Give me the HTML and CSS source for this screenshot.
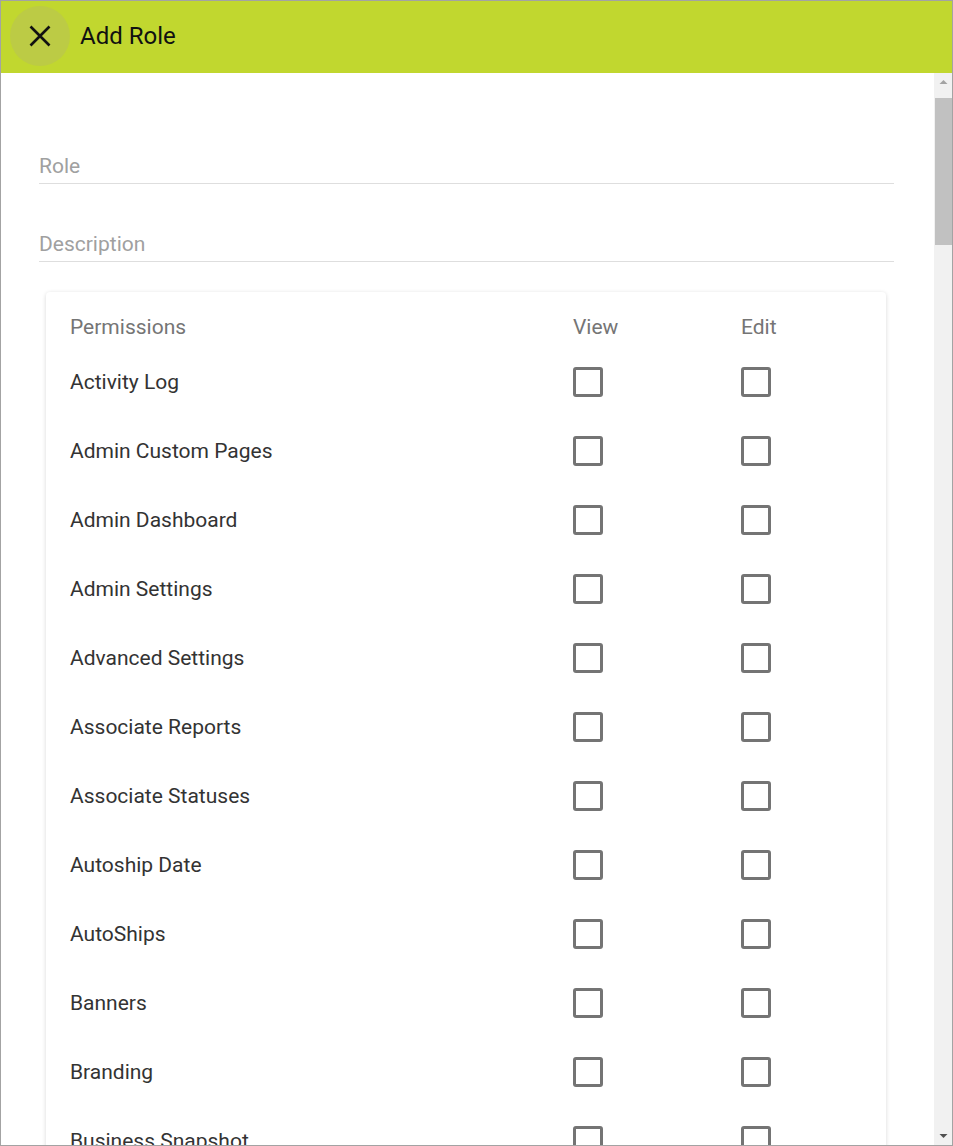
FILE: index.html
```html
<!DOCTYPE html>
<html lang="en">
<head>
<meta charset="utf-8">
<title>Add Role</title>
<link rel="stylesheet" href="styles.css">
</head>
<body>
<div class="dialog">
  <header class="topbar">
    <button class="close" aria-label="Close">
      <svg width="22" height="22" viewBox="0 0 22 22"><path d="M1.5 1.5 L20.5 20.5 M20.5 1.5 L1.5 20.5" stroke="#111" stroke-width="2.6" fill="none"/></svg>
    </button>
    <h1 class="title">Add Role</h1>
  </header>
  <div class="body">
    <main class="content">
      <div class="field"><span class="placeholder">Role</span></div>
      <div class="field"><span class="placeholder">Description</span></div>
      <section class="card">
        <div class="perm-table">
          <div class="perm-head">Permissions</div><div class="perm-head">View</div><div class="perm-head">Edit</div>
          <div class="perm-name">Activity Log</div><div class="cell"><span class="box"></span></div><div class="cell"><span class="box"></span></div>
          <div class="perm-name">Admin Custom Pages</div><div class="cell"><span class="box"></span></div><div class="cell"><span class="box"></span></div>
          <div class="perm-name">Admin Dashboard</div><div class="cell"><span class="box"></span></div><div class="cell"><span class="box"></span></div>
          <div class="perm-name">Admin Settings</div><div class="cell"><span class="box"></span></div><div class="cell"><span class="box"></span></div>
          <div class="perm-name">Advanced Settings</div><div class="cell"><span class="box"></span></div><div class="cell"><span class="box"></span></div>
          <div class="perm-name">Associate Reports</div><div class="cell"><span class="box"></span></div><div class="cell"><span class="box"></span></div>
          <div class="perm-name">Associate Statuses</div><div class="cell"><span class="box"></span></div><div class="cell"><span class="box"></span></div>
          <div class="perm-name">Autoship Date</div><div class="cell"><span class="box"></span></div><div class="cell"><span class="box"></span></div>
          <div class="perm-name">AutoShips</div><div class="cell"><span class="box"></span></div><div class="cell"><span class="box"></span></div>
          <div class="perm-name">Banners</div><div class="cell"><span class="box"></span></div><div class="cell"><span class="box"></span></div>
          <div class="perm-name">Branding</div><div class="cell"><span class="box"></span></div><div class="cell"><span class="box"></span></div>
          <div class="perm-name">Business Snapshot</div><div class="cell"><span class="box"></span></div><div class="cell"><span class="box"></span></div>
        </div>
      </section>
    </main>
    <div class="scrollbar" aria-hidden="true">
      <div class="sb-btn">
        <svg width="17" height="17" viewBox="0 0 17 17"><path d="M4.5 11 L12.5 11 L8.5 7 Z" fill="#a3a3a3"/></svg>
      </div>
      <div class="sb-track"><div class="sb-thumb"></div></div>
      <div class="sb-btn">
        <svg width="17" height="17" viewBox="0 0 17 17"><path d="M4.5 6 L12.5 6 L8.5 10 Z" fill="#505050"/></svg>
      </div>
    </div>
  </div>
</div>
</body>
</html>
```

FILE: styles.css
```css
* { box-sizing: border-box; }
html, body { margin: 0; padding: 0; }
body {
  font-family: Roboto, "Noto Sans", Arial, sans-serif;
  background: #fff;
}
.dialog {
  width: 953px;
  height: 1146px;
  border: 1px solid #a3a3a3;
  display: flex;
  flex-direction: column;
  overflow: hidden;
}
.topbar {
  flex: 0 0 72px;
  background: #c1d72f;
  display: flex;
  align-items: center;
  padding-left: 9px;
}
.close {
  width: 60px;
  height: 60px;
  border-radius: 50%;
  border: none;
  background: #bccb45;
  display: flex;
  align-items: center;
  justify-content: center;
  padding: 0;
  margin-top: -2px;
}
.close svg { display: block; }
.title {
  margin: -2px 0 0 10px;
  font-size: 24px;
  font-weight: 400;
  color: #111;
}
.body {
  flex: 1 1 auto;
  min-height: 0;
  display: flex;
}
.content {
  flex: 1 1 auto;
  overflow: hidden;
  padding: 55px 40px 0 38px;
}
.scrollbar {
  flex: 0 0 18px;
  background: #f1f1f1;
  display: flex;
  flex-direction: column;
  padding-left: 1px;
}
.sb-btn { flex: 0 0 17px; }
.sb-btn svg { display: block; }
.sb-track {
  flex: 1 1 auto;
  padding-top: 8px;
}
.sb-thumb {
  height: 147px;
  background: #c1c1c1;
}
.field {
  height: 56px;
  padding: 27px 0 7px 0;
  border-bottom: 1px solid #dedede;
  margin-bottom: 22px;
}
.placeholder {
  display: block;
  font-size: 21px;
  line-height: 22px;
  color: #a0a0a0;
}
.card {
  margin: 30px 8px 0 7px;
  border-radius: 4px;
  box-shadow: 0 1px 4px rgba(0, 0, 0, 0.16);
  padding: 15px 24px 24px 24px;
}
.perm-table {
  display: grid;
  grid-template-columns: 503px 168px 1fr;
  grid-auto-rows: 69px;
  grid-template-rows: 40px;
  align-items: center;
}
.perm-head {
  font-size: 21px;
  color: #757575;
}
.perm-name {
  font-size: 21px;
  color: #333;
}
.cell { display: flex; align-items: center; }
.box {
  display: block;
  width: 30px;
  height: 30px;
  border: 3px solid #747474;
  border-radius: 3px;
}
```
